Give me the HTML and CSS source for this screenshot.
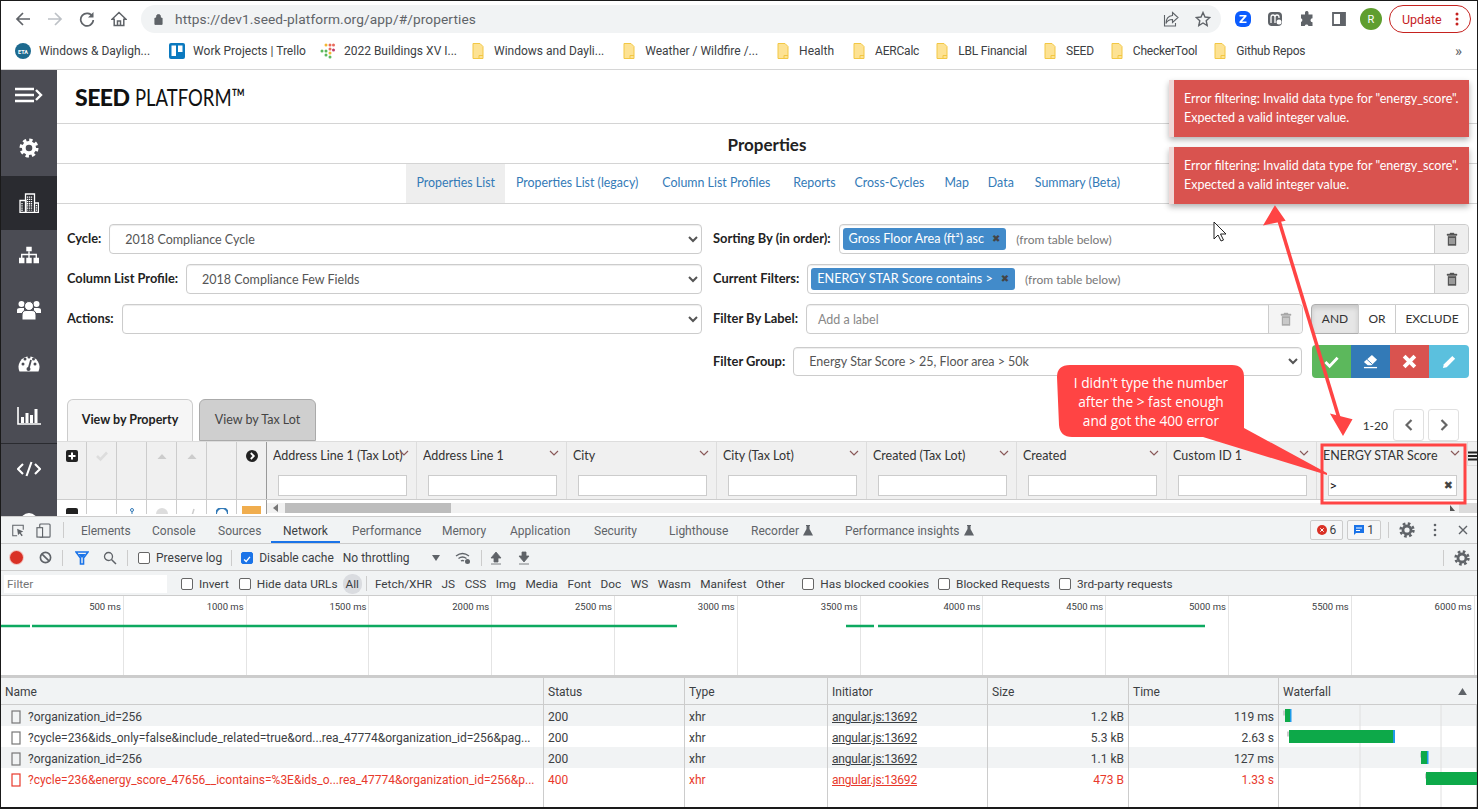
FILE: index.html
```
<!DOCTYPE html>
<html lang="en">
<head>
<meta charset="utf-8">
<title>SEED Platform - Properties</title>
<link rel="stylesheet" href="styles.css">
</head>
<body>
<svg class="sprite" width="0" height="0">
  <symbol id="folder" viewBox="0 0 12 16"><path d="M1 .5h7l3 3v12H1z" fill="#fde293" stroke="#f2c744"/><path d="M7 15.500v-3h4" fill="none" stroke="#f2c744"/></symbol>
  <symbol id="trash" viewBox="0 0 12 14"><path d="M4 2V1h4v1h3v1.400H1V2zM2 4.300h8V13.500H2z" fill="currentColor" stroke="currentColor" stroke-width=".4"/><path d="M4 6v6M6 6v6M8 6v6" stroke="#eee" stroke-width=".9"/></symbol>
  <symbol id="chev" viewBox="0 0 10 6"><path d="M1 1l4 4 4-4" fill="none" stroke="#8a5a5a" stroke-width="1.200"/></symbol>
  <symbol id="box" viewBox="0 0 10 14"><rect x="1" y="1" width="8" height="12" fill="none" stroke="currentColor" stroke-width="1.200"/></symbol>
  <symbol id="flask" viewBox="0 0 10 12"><path d="M3 1h4v1H6.500v3L10 11.500H0L3.500 5V2H3z" fill="#5f6368"/></symbol>
  <symbol id="gearg" viewBox="0 0 16 16"><circle cx="8" cy="8" r="6.400" fill="none" stroke="#5f6368" stroke-width="2.600" stroke-dasharray="2.600 2.430"/><circle cx="8" cy="8" r="4" fill="none" stroke="#5f6368" stroke-width="2.800"/></symbol>
</svg>

<header class="chrome">
  <div class="toolbar">
    <svg class="tb-ic tb-back" viewBox="0 0 16 16"><path d="M15 8H2M8 2L2 8l6 6" fill="none" stroke="#5f6368" stroke-width="1.700"/></svg>
    <svg class="tb-ic" viewBox="0 0 16 16"><path d="M1 8h13M8 2l6 6-6 6" fill="none" stroke="#bdc1c6" stroke-width="1.700"/></svg>
    <svg class="tb-ic" viewBox="0 0 16 16"><path d="M13.500 5.500A6.300 6.300 0 1 0 14.300 9" fill="none" stroke="#5f6368" stroke-width="1.700"/><path d="M14.500 1v5.500H9z" fill="#5f6368"/></svg>
    <svg class="tb-ic" viewBox="0 0 16 16"><path d="M8 1.500L1 8.300h2.200v6.200h9.600V8.300H15zM6.500 14.500V10h3v4.500" fill="none" stroke="#5f6368" stroke-width="1.500"/></svg>
    <div class="omnibox">
      <svg class="lock" viewBox="0 0 10 12"><path d="M1 5h8v7H1zM2.800 5V3.200a2.200 2.200 0 0 1 4.400 0V5" fill="#5f6368" stroke="#5f6368"/></svg>
      <span class="url">https://dev1.seed-platform.org/app/#/properties</span>
      <svg class="omni-ic" viewBox="0 0 16 16"><path d="M9.500 1.500l5.500 5-5.500 5V8.500C6 8.500 4 10 3 12.500 3 8 5.500 5 9.500 4.500zM1.500 4v11h11v-3" fill="none" stroke="#5f6368" stroke-width="1.100"/></svg>
      <svg class="omni-ic star" viewBox="0 0 16 16"><path d="M8 1.500l2 4.500 4.800.500-3.600 3.200 1 4.800L8 12l-4.200 2.500 1-4.800L1.200 6.500 6 6z" fill="none" stroke="#5f6368" stroke-width="1.400"/></svg>
    </div>
    <div class="exts">
      <svg class="ext" viewBox="0 0 16 16"><rect x="0" y="0" width="16" height="16" rx="6" fill="#0b5cff"/><path d="M4.500 4h7v1.500L7 10.500h4.500V12h-7v-1.500l4.500-5H4.500z" fill="#fff"/></svg>
      <svg class="ext" viewBox="0 0 16 16"><rect x="1" y="1" width="14" height="14" rx="4" fill="#5f6368"/><path d="M4 12V6a2 2 0 0 1 4 0v6M8 6a2 2 0 0 1 4 0v1" fill="none" stroke="#fff" stroke-width="1.300"/><circle cx="12" cy="11" r="2.500" fill="#fff"/></svg>
      <svg class="ext" viewBox="0 0 16 16"><path d="M6 1.500a1.800 1.800 0 0 1 3.500 0V3.500h4v3.700a2 2 0 0 0 0 4V15H9.500a2 2 0 0 0-3.800 0H2v-4a2 2 0 0 0 0-3.800V3.500h4z" fill="#5f6368"/></svg>
      <svg class="ext" viewBox="0 0 16 16"><path d="M2 2h12v12H2z" fill="none" stroke="#5f6368" stroke-width="1.800"/><path d="M9 2h5v12H9z" fill="#5f6368"/></svg>
      <span class="avatar">R</span>
      <div class="update"><span>Update</span><svg class="dots" viewBox="0 0 4 14"><circle cx="2" cy="2" r="1.500" fill="#c5221f"/><circle cx="2" cy="7" r="1.500" fill="#c5221f"/><circle cx="2" cy="12" r="1.500" fill="#c5221f"/></svg></div>
    </div>
  </div>
  <nav class="bookmarks">
    <span class="bm"><svg class="bm-ic" viewBox="0 0 16 16"><circle cx="8" cy="8" r="8" fill="#1d6a8f"/><text x="8" y="10.500" class="eta">ETA</text></svg>Windows &amp; Dayligh...</span>
    <span class="bm bm-trello"><svg class="bm-ic" viewBox="0 0 16 16"><rect width="16" height="16" rx="2" fill="#0b79bf"/><rect x="2.500" y="2.500" width="4.500" height="10.500" fill="#fff"/><rect x="9" y="2.500" width="4.500" height="6.500" fill="#fff"/></svg>Work Projects | Trello</span>
    <span class="bm bm-slack"><svg class="bm-ic" viewBox="0 0 16 16"><g fill="#e96a5b"><circle cx="10" cy="2" r="1.500"/><circle cx="13.500" cy="2" r="1.500"/><circle cx="10" cy="6" r="1.500"/></g><g fill="#f2b632"><circle cx="10" cy="10" r="1.500"/><circle cx="6" cy="2" r="1.500"/></g><g fill="#c0396b"><circle cx="13.500" cy="7" r="1.500"/></g><g fill="#5cb85c"><circle cx="2" cy="8" r="1.500"/><circle cx="6" cy="8" r="1.500"/><circle cx="6" cy="12" r="1.500"/><circle cx="10" cy="14" r="1.500"/></g></svg>2022 Buildings XV I...</span>
    <span class="bm bm-f1"><svg class="bm-fold"><use href="#folder"/></svg>Windows and Dayli...</span>
    <span class="bm bm-f"><svg class="bm-fold"><use href="#folder"/></svg>Weather / Wildfire /...</span>
    <span class="bm bm-f"><svg class="bm-fold"><use href="#folder"/></svg>Health</span>
    <span class="bm bm-f bm-n"><svg class="bm-fold"><use href="#folder"/></svg>AERCalc</span>
    <span class="bm bm-s bm-n"><svg class="bm-fold"><use href="#folder"/></svg>LBL Financial</span>
    <span class="bm bm-s bm-n"><svg class="bm-fold"><use href="#folder"/></svg>SEED</span>
    <span class="bm bm-s bm-n"><svg class="bm-fold"><use href="#folder"/></svg>CheckerTool</span>
    <span class="bm bm-s bm-n"><svg class="bm-fold"><use href="#folder"/></svg>Github Repos</span>
    <span class="bm-more">»</span>
  </nav>
</header>

<section class="app">
  <aside class="sidebar">
    <div class="side-item side-h53"><svg class="side-ic side-menu" viewBox="0 0 28 16"><path d="M0 2h19M0 8h19M0 14h19" stroke="#fff" stroke-width="2.400"/><path d="M21 3l5 5-5 5" fill="none" stroke="#fff" stroke-width="2.400"/></svg></div>
    <div class="side-item side-h53"><svg class="side-ic" viewBox="0 0 20 20"><circle cx="10" cy="10" r="7.900" fill="none" stroke="#fff" stroke-width="3.200" stroke-dasharray="3.300 2.900"/><circle cx="10" cy="10" r="5.200" fill="none" stroke="#fff" stroke-width="3.800"/></svg></div>
    <div class="side-item side-active"><svg class="side-ic side-flat" viewBox="0 0 20 20"><path d="M1 7.500h6v12H1zM6.500 1h9v18.500h-9zM15.500 10h4v9.500h-4z" fill="none" stroke="#fff" stroke-width="1.300"/><path d="M8.500 3.500v14M10.500 3.500v14M12.500 3.500v14M3 10v8M17.500 12v6" stroke="#fff" stroke-width="1.300" stroke-dasharray="1.300 .9"/></svg></div>
    <div class="side-item side-h53"><svg class="side-ic" viewBox="0 0 22 20"><path d="M8 1h6v5H8zM0 13h6v6H0zM8 13h6v6H8zM16 13h6v6h-6z" fill="#fff"/><path d="M3 14V9.500h16V14M11 6v8" fill="none" stroke="#fff" stroke-width="1.500"/></svg></div>
    <div class="side-item"><svg class="side-ic side-wide side-flat" viewBox="0 0 24 20"><circle cx="4.500" cy="4" r="3" fill="#fff"/><circle cx="19.500" cy="4" r="3" fill="#fff"/><path d="M0 13V10q0-2 3-2h4v5zM24 13V10q0-2-3-2h-4v5z" fill="#fff"/><circle cx="12" cy="6" r="4.500" fill="#fff" stroke="#4b4c54"/><path d="M5 20v-5q0-4.500 4-4.500h6q4 0 4 4.500v5z" fill="#fff" stroke="#4b4c54"/></svg></div>
    <div class="side-item"><svg class="side-ic side-wide" viewBox="0 0 22 20"><path d="M1.500 18.500a10.500 10.500 0 1 1 19 0z" fill="#fff"/><g fill="#4b4c54"><circle cx="5" cy="11" r="1.500"/><circle cx="7" cy="6" r="1.500"/><circle cx="11" cy="4" r="1.500"/><circle cx="17" cy="11" r="1.500"/><circle cx="15.500" cy="6" r="1.500"/></g><path d="M10.500 16L13 7" stroke="#4b4c54" stroke-width="1.800"/><circle cx="10.500" cy="16" r="2" fill="#4b4c54"/></svg></div>
    <div class="side-item side-chart"><svg class="side-ic side-wide" viewBox="0 0 24 20"><path d="M1 1v17h23" fill="none" stroke="#fff" stroke-width="1.600"/><path d="M4 11h3v6H4zM8.500 7h3v10h-3zM13 9h3v8h-3zM17.500 3h3v14h-3z" fill="#fff"/></svg></div>
    <div class="side-item side-code"><svg class="side-ic side-wide" viewBox="0 0 24 16"><path d="M6 3L1 8l5 5M18 3l5 5-5 5M14.500 1L9.500 15" fill="none" stroke="#fff" stroke-width="2.100"/></svg></div>
    <div class="side-last"></div>
  </aside>

  <main class="content">
    <div class="brand"><b>SEED</b> <span class="brand-thin">PLATFORM™</span></div>
    <h1 class="title">Properties</h1>
    <nav class="subnav">
      <a class="sub sub-active">Properties List</a>
      <a class="sub">Properties List (legacy)</a>
      <a class="sub">Column List Profiles</a>
      <a class="sub">Reports</a>
      <a class="sub">Cross-Cycles</a>
      <a class="sub">Map</a>
      <a class="sub">Data</a>
      <a class="sub">Summary (Beta)</a>
    </nav>

    <form class="filters">
      <div class="fcol fcol-left">
        <div class="frow"><label class="flabel">Cycle:</label><select class="fselect"><option>2018 Compliance Cycle</option></select></div>
        <div class="frow"><label class="flabel">Column List Profile:</label><select class="fselect"><option>2018 Compliance Few Fields</option></select></div>
        <div class="frow"><label class="flabel">Actions:</label><select class="fselect"><option></option></select></div>
      </div>
      <div class="fcol fcol-right">
        <div class="frow">
          <label class="flabel">Sorting By (in order):</label>
          <div class="tagbox">
            <span class="tag">Gross Floor Area (ft²) asc<i class="tag-x">✖</i></span>
            <span class="hint">(from table below)</span>
            <span class="tb-trash"><svg class="trash-ic"><use href="#trash"/></svg></span>
          </div>
        </div>
        <div class="frow">
          <label class="flabel">Current Filters:</label>
          <div class="tagbox">
            <span class="tag">ENERGY STAR Score contains &gt;<i class="tag-x">✖</i></span>
            <span class="hint">(from table below)</span>
            <span class="tb-trash"><svg class="trash-ic"><use href="#trash"/></svg></span>
          </div>
        </div>
        <div class="frow">
          <label class="flabel">Filter By Label:</label>
          <div class="tagbox labelbox">
            <span class="placeholder">Add a label</span>
            <span class="tb-trash tb-trash-off"><svg class="trash-ic"><use href="#trash"/></svg></span>
          </div>
          <div class="btn-group">
            <span class="seg seg-on">AND</span><span class="seg seg-or">OR</span><span class="seg seg-ex">EXCLUDE</span>
          </div>
        </div>
        <div class="frow frow-group">
          <label class="flabel">Filter Group:</label>
          <select class="fselect group-select"><option>Energy Star Score &gt; 25, Floor area &gt; 50k</option></select>
          <div class="actions">
            <span class="act act-g"><svg viewBox="0 0 16 14" class="act-ic"><path d="M1.500 7.500l4.500 4.500 8.500-9" fill="none" stroke="#fff" stroke-width="3"/></svg></span>
            <span class="act act-b"><svg viewBox="0 0 16 16" class="act-ic"><path d="M9.500 1l5.500 5-6 6H5L1 8.500z" fill="#fff"/><path d="M4 5.500l5.500 5M1 14.500h14" stroke="#337ab7" stroke-width="1"/><path d="M1 14.500h14" stroke="#fff" stroke-width="1.400"/></svg></span>
            <span class="act act-r"><svg viewBox="0 0 14 14" class="act-ic"><path d="M2 2l10 10M12 2L2 12" stroke="#fff" stroke-width="3.600"/></svg></span>
            <span class="act act-c"><svg viewBox="0 0 16 16" class="act-ic"><path d="M1 15l1-4L11 2l3 3-9 9z" fill="#fff"/></svg></span>
          </div>
        </div>
      </div>
    </form>

    <div class="tabbar">
      <span class="vtab vtab-on">View by Property</span>
      <span class="vtab vtab-off">View by Tax Lot</span>
      <div class="pager"><span class="pager-count">1-20</span>
        <span class="pg"><svg viewBox="0 0 8 12" class="pg-ic"><path d="M6.500 1L1.500 6l5 5" fill="none" stroke="#666" stroke-width="2.200"/></svg></span>
        <span class="pg"><svg viewBox="0 0 8 12" class="pg-ic"><path d="M1.500 1l5 5-5 5" fill="none" stroke="#666" stroke-width="2.200"/></svg></span>
      </div>
    </div>

    <div class="grid-head">
      <div class="gh-ic"><svg viewBox="0 0 12 12" class="gi"><rect width="12" height="12" rx="2" fill="#222"/><path d="M6 2.500v7M2.500 6h7" stroke="#fff" stroke-width="2"/></svg></div>
      <div class="gh-ic"><svg viewBox="0 0 12 10" class="gi"><path d="M1 5l3.500 3.500L11 1.500" fill="none" stroke="#ddd" stroke-width="2.600"/></svg></div>
      <div class="gh-ic"></div>
      <div class="gh-ic"><svg viewBox="0 0 10 6" class="gi-t"><path d="M5 0l4.500 5H.5z" fill="#ccc"/></svg></div>
      <div class="gh-ic"><svg viewBox="0 0 10 6" class="gi-t"><path d="M5 0l4.500 5H.5z" fill="#ccc"/></svg></div>
      <div class="gh-ic"></div>
      <div class="gh-ic"><svg viewBox="0 0 12 12" class="gi"><circle cx="6" cy="6" r="6" fill="#222"/><path d="M4.800 3l3 3-3 3" fill="none" stroke="#fff" stroke-width="1.800"/></svg></div>
      <div class="gh-col"><div class="gh-name"><span class="gh-txt">Address Line 1 (Tax Lot)</span><svg class="gh-chev"><use href="#chev"/></svg></div><span class="gh-input"></span></div>
      <div class="gh-col"><div class="gh-name"><span class="gh-txt">Address Line 1</span><svg class="gh-chev"><use href="#chev"/></svg></div><span class="gh-input"></span></div>
      <div class="gh-col"><div class="gh-name"><span class="gh-txt">City</span><svg class="gh-chev"><use href="#chev"/></svg></div><span class="gh-input"></span></div>
      <div class="gh-col"><div class="gh-name"><span class="gh-txt">City (Tax Lot)</span><svg class="gh-chev"><use href="#chev"/></svg></div><span class="gh-input"></span></div>
      <div class="gh-col"><div class="gh-name"><span class="gh-txt">Created (Tax Lot)</span><svg class="gh-chev"><use href="#chev"/></svg></div><span class="gh-input"></span></div>
      <div class="gh-col"><div class="gh-name"><span class="gh-txt">Created</span><svg class="gh-chev"><use href="#chev"/></svg></div><span class="gh-input"></span></div>
      <div class="gh-col"><div class="gh-name"><span class="gh-txt">Custom ID 1</span><svg class="gh-chev"><use href="#chev"/></svg></div><span class="gh-input"></span></div>
      <div class="gh-col gh-last"><div class="gh-name"><span class="gh-txt">ENERGY STAR Score</span><svg class="gh-chev"><use href="#chev"/></svg></div><span class="gh-input gh-filled"><span>&gt;</span><i class="gh-clear">✖</i></span></div>
      <div class="gh-menu"><svg viewBox="0 0 12 10" class="gi"><path d="M0 1.500h12M0 5h12M0 8.500h12" stroke="#222" stroke-width="2"/></svg></div>
    </div>
    <div class="grid-row">
      <div class="gr-ic"><svg viewBox="0 0 12 12" class="gi"><rect width="12" height="12" rx="2" fill="#222"/></svg></div>
      <div class="gr-ic"></div>
      <div class="gr-ic"><svg viewBox="0 0 8 12" class="gi-s"><circle cx="4" cy="2" r="1.500" fill="none" stroke="#337ab7"/><path d="M4 3.500v8" stroke="#337ab7"/></svg></div>
      <div class="gr-ic"><svg viewBox="0 0 12 12" class="gi"><circle cx="6" cy="6" r="6" fill="#ddd"/></svg></div>
      <div class="gr-ic"><svg viewBox="0 0 8 12" class="gi-s"><path d="M6 1L3 11" stroke="#ccc" stroke-width="1.500"/></svg></div>
      <div class="gr-ic"><svg viewBox="0 0 12 12" class="gi"><circle cx="6" cy="6" r="6" fill="none" stroke="#337ab7" stroke-width="2"/></svg></div>
      <div class="gr-ic gr-orange"><span class="orange"></span></div>
      <div class="scrollbar">
        <svg viewBox="0 0 6 8" class="sb-arrow"><path d="M5 0v8L0 4z" fill="#777"/></svg>
        <span class="sb-thumb"></span>
        <svg viewBox="0 0 6 8" class="sb-end"><path d="M1 1l5 6H1z" fill="#555"/></svg>
        <span class="sb-corner"></span>
      </div>
    </div>
  </main>
</section>

<section class="devtools">
  <div class="dt-tabs">
    <svg class="dt-i1" viewBox="0 0 16 16"><path d="M7 14H2V2h12v5" fill="none" stroke="#5f6368" stroke-width="1.200"/><path d="M7 6l7 3-3 1.500 2.500 3-1.500 1-2-3L8 13z" fill="#5f6368"/></svg>
    <svg class="dt-i2" viewBox="0 0 16 16"><rect x="4" y="1" width="11" height="14" rx="1" fill="none" stroke="#5f6368" stroke-width="1.200"/><rect x="1" y="5" width="6" height="10" fill="#f1f3f4" stroke="#5f6368" stroke-width="1.200"/></svg>
    <span class="dt-sep dt-sep1"></span>
    <span class="dt-tab t-el">Elements</span>
    <span class="dt-tab t-co">Console</span>
    <span class="dt-tab t-so">Sources</span>
    <span class="dt-tab dt-on">Network</span>
    <span class="dt-tab t-pe">Performance</span>
    <span class="dt-tab t-me">Memory</span>
    <span class="dt-tab t-ap">Application</span>
    <span class="dt-tab t-se">Security</span>
    <span class="dt-tab t-li">Lighthouse</span>
    <span class="dt-tab t-re">Recorder<svg class="flask"><use href="#flask"/></svg></span>
    <span class="dt-tab t-pi">Performance insights<svg class="flask"><use href="#flask"/></svg></span>
    <div class="dt-right">
      <span class="badge"><svg class="badge-ic" viewBox="0 0 10 10"><circle cx="5" cy="5" r="5" fill="#d93025"/><path d="M3.300 3.300l3.400 3.400M6.700 3.300l-3.400 3.400" stroke="#fff"/></svg>6</span>
      <span class="badge"><svg class="badge-ic badge-msg" viewBox="0 0 10 10"><path d="M0 0h10v8H2L0 10z" fill="#1a73e8"/><path d="M2 3h6M2 5.500h4" stroke="#fff"/></svg>1</span>
      <span class="dt-sep dt-sep2"></span>
      <svg class="dt-gear"><use href="#gearg"/></svg>
      <svg class="dt-dots" viewBox="0 0 4 14"><circle cx="2" cy="2" r="1.300" fill="#5f6368"/><circle cx="2" cy="7" r="1.300" fill="#5f6368"/><circle cx="2" cy="12" r="1.300" fill="#5f6368"/></svg>
      <svg class="dt-close" viewBox="0 0 10 10"><path d="M1 1l8 8M9 1L1 9" stroke="#5f6368" stroke-width="1.400"/></svg>
    </div>
  </div>
  <div class="dt-bar">
    <span class="rec"></span>
    <svg class="dt-clear" viewBox="0 0 14 14"><circle cx="7" cy="7" r="5.500" fill="none" stroke="#5f6368" stroke-width="1.800"/><path d="M3 3l8 8" stroke="#5f6368" stroke-width="1.800"/></svg>
    <span class="dt-sep"></span>
    <svg class="dt-funnel" viewBox="0 0 14 14"><path d="M1 1h12L8.500 7v6h-3V7z" fill="none" stroke="#1a73e8" stroke-width="1.600"/><path d="M3.500 3h7L8 6.500H6z" fill="#1a73e8"/></svg>
    <svg class="dt-search" viewBox="0 0 14 14"><circle cx="5.500" cy="5.500" r="4" fill="none" stroke="#5f6368" stroke-width="1.300"/><path d="M8.500 8.500l4.500 4.500" stroke="#5f6368" stroke-width="1.500"/></svg>
    <span class="dt-sep"></span>
    <span class="cb"></span><span class="dt-lbl">Preserve log</span>
    <span class="dt-sep"></span>
    <span class="cb cb-on"><svg viewBox="0 0 12 12"><path d="M2.500 6.500l2.500 2.500 4.500-5.500" fill="none" stroke="#fff" stroke-width="1.600"/></svg></span><span class="dt-lbl">Disable cache</span>
    <span class="dt-lbl throttle">No throttling</span>
    <svg class="tri" viewBox="0 0 8 6"><path d="M0 0h8L4 6z" fill="#5f6368"/></svg>
    <svg class="wifi" viewBox="0 0 16 14"><path d="M1 5q6.500-5 13 0M3.500 7.500q4-3 8 0M6 10q1.500-1 3 0" fill="none" stroke="#5f6368" stroke-width="1.300"/><circle cx="12.500" cy="10.500" r="2.500" fill="#5f6368"/></svg>
    <span class="dt-sep"></span>
    <svg class="arr" viewBox="0 0 12 14"><path d="M6 1L1 7h3v4h4V7h3zM1 13h10" fill="#5f6368" stroke="#5f6368" stroke-width=".8"/></svg>
    <svg class="arr arr2" viewBox="0 0 12 14"><path d="M6 11L1 5h3V1h4v4h3zM1 13h10" fill="#5f6368" stroke="#5f6368" stroke-width=".8"/></svg>
    <span class="bar-gap"></span>
    <span class="dt-sep"></span>
    <svg class="dt-gear bar-gear"><use href="#gearg"/></svg>
  </div>
  <div class="dt-filter">
    <span class="filter-input">Filter</span>
    <span class="cb"></span><span class="dt-lbl lbl-inv">Invert</span>
    <span class="cb"></span><span class="dt-lbl lbl-hide">Hide data URLs</span>
    <span class="chip chip-on">All</span><span class="dt-sep"></span>
    <span class="chip">Fetch/XHR</span><span class="chip">JS</span><span class="chip">CSS</span><span class="chip">Img</span><span class="chip">Media</span><span class="chip">Font</span><span class="chip">Doc</span><span class="chip">WS</span><span class="chip">Wasm</span><span class="chip">Manifest</span><span class="chip">Other</span>
    <span class="cb cb-a"></span><span class="dt-lbl lbl-a">Has blocked cookies</span>
    <span class="cb"></span><span class="dt-lbl lbl-a">Blocked Requests</span>
    <span class="cb"></span><span class="dt-lbl">3rd-party requests</span>
  </div>
  <div class="timeline">
    <span class="tick">500 ms</span><span class="tick">1000 ms</span><span class="tick">1500 ms</span><span class="tick">2000 ms</span><span class="tick">2500 ms</span><span class="tick">3000 ms</span><span class="tick">3500 ms</span><span class="tick">4000 ms</span><span class="tick">4500 ms</span><span class="tick">5000 ms</span><span class="tick">5500 ms</span><span class="tick">6000 ms</span>
    <svg class="tl-bars" viewBox="0 0 1476 6"><path d="M0 3h29M31 3h645M845 3h28M877 3h327" stroke="#0da960" stroke-width="2.500"/></svg>
  </div>
  <div class="net">
    <div class="net-row net-head">
      <span class="nc nc-name">Name</span><span class="nc">Status</span><span class="nc">Type</span><span class="nc">Initiator</span><span class="nc">Size</span><span class="nc">Time</span><span class="nc nc-wf">Waterfall<svg class="wf-tri" viewBox="0 0 10 8"><path d="M5 0l5 8H0z" fill="#5f6368"/></svg></span>
    </div>
    <div class="net-row net-alt">
      <span class="nc nc-name"><svg class="file"><use href="#box"/></svg>?organization_id=256</span><span class="nc">200</span><span class="nc">xhr</span><span class="nc nc-link">angular.js:13692</span><span class="nc nc-r">1.2 kB</span><span class="nc nc-r">119 ms</span><span class="nc"></span>
    </div>
    <div class="net-row">
      <span class="nc nc-name"><svg class="file"><use href="#box"/></svg>?cycle=236&amp;ids_only=false&amp;include_related=true&amp;ord...rea_47774&amp;organization_id=256&amp;pag...</span><span class="nc">200</span><span class="nc">xhr</span><span class="nc nc-link">angular.js:13692</span><span class="nc nc-r">5.3 kB</span><span class="nc nc-r">2.63 s</span><span class="nc"></span>
    </div>
    <div class="net-row net-alt">
      <span class="nc nc-name"><svg class="file"><use href="#box"/></svg>?organization_id=256</span><span class="nc">200</span><span class="nc">xhr</span><span class="nc nc-link">angular.js:13692</span><span class="nc nc-r">1.1 kB</span><span class="nc nc-r">127 ms</span><span class="nc"></span>
    </div>
    <div class="net-row net-err">
      <span class="nc nc-name"><svg class="file"><use href="#box"/></svg>?cycle=236&amp;energy_score_47656__icontains=%3E&amp;ids_o...rea_47774&amp;organization_id=256&amp;p...</span><span class="nc">400</span><span class="nc">xhr</span><span class="nc nc-link">angular.js:13692</span><span class="nc nc-r">473 B</span><span class="nc nc-r">1.33 s</span><span class="nc"></span>
    </div>
    <div class="net-row net-fill"><span class="nc"></span><span class="nc"></span><span class="nc"></span><span class="nc"></span><span class="nc"></span><span class="nc"></span><span class="nc"></span></div>
    <svg class="wf" viewBox="0 0 198 104">
      <path d="M81 0v104M162 0v104" stroke="#e0e0e0"/>
      <path d="M4 8h2M8 29h2M141 50h3M146 71h3" stroke="#ccc" stroke-width="5"/>
      <rect x="6" y="4" width="5" height="13" fill="#0da949"/><rect x="11" y="4" width="1.500" height="13" fill="#1e9be8"/>
      <rect x="10" y="25" width="104" height="13" fill="#0da949"/><rect x="114" y="25" width="2" height="13" fill="#1e9be8"/>
      <rect x="142" y="46" width="6" height="13" fill="#0da949"/><rect x="148" y="46" width="1.500" height="13" fill="#1e9be8"/>
      <rect x="147" y="67" width="51" height="13" fill="#0da949"/>
    </svg>
  </div>
</section>

<div class="toast toast-1">Error filtering: Invalid data type for "energy_score".<br>Expected a valid integer value.</div>
<div class="toast toast-2">Error filtering: Invalid data type for "energy_score".<br>Expected a valid integer value.</div>
<svg class="annot" viewBox="0 0 1478 809">
  <path d="M1277 214L1342 428" stroke="#ff4444" stroke-width="3.500"/>
  <path d="M1275 207l-10 17 19-4zM1343 434l-11-19 19 5z" fill="#ff4444" stroke="#ff4444" stroke-width="2"/>
  <path d="M1070 365H1232Q1244 365 1244 377V428L1327 473V475L1203 437H1072Q1060 437 1059 425L1057 377Q1057 365 1070 365Z" fill="#ff4444"/>
  <path d="M1322 445h143v58h-143z" fill="none" stroke="#ff4444" stroke-width="3"/>
  <path d="M1214 222v17l4-4 3 6 2.500-1-3-6h5.500z" fill="#fff" stroke="#222" stroke-width="1"/>
</svg>
<div class="callout">I didn't type the number<br>after the &gt; fast enough<br>and got the 400 error</div>
</body>
</html>
```
FILE: styles.css
```
* { box-sizing: border-box; }
html, body { margin: 0; padding: 0; }
body {
  width: 1478px; height: 809px; overflow: hidden; position: relative;
  background: #fff; font-family: Roboto, "Liberation Sans", sans-serif; font-size: 12px; color: #303942;
  border: 1px solid #1a1a1a; border-bottom-width: 2px;
  display: flex; flex-direction: column;
}
.sprite { position: absolute; }

/* browser chrome */
.chrome { height: 69px; flex: none; border-bottom: 1px solid #d6d6d6; background: #fff; }
.toolbar { height: 34px; display: flex; align-items: center; padding: 2px 6px 0 0; }
.tb-ic { width: 16px; height: 16px; margin-right: 16px; flex: none; }
.tb-back { margin-left: 14px; }
.omnibox { width: 1080px; height: 28px; margin-left: -2px; border-radius: 14px; background: #f1f3f4; display: flex; align-items: center; padding-left: 13px; flex: none; }
.lock { width: 9px; height: 12px; flex: none; }
.url { font-size: 13.700px; color: #5f6368; margin-left: 12px; flex: 1; letter-spacing: .1px; }
.omni-ic { width: 16px; height: 16px; flex: none; margin-right: 16px; }
.omni-ic.star { margin-right: 10px; }
.exts { display: flex; align-items: center; margin-left: 14px; }
.ext { width: 16px; height: 16px; margin-right: 16px; flex: none; }
.avatar { width: 22px; height: 22px; border-radius: 50%; background: #5f9e2f; color: #fff; font-size: 11px; display: flex; align-items: center; justify-content: center; margin-left: -3px; }
.update { width: 82px; height: 28px; margin-left: 7px; border: 1px solid #c5221f; border-radius: 14px; display: flex; align-items: center; padding-left: 12px; color: #c5221f; font-size: 12.500px; }
.dots { width: 4px; height: 14px; margin-left: 13px; }
.bookmarks { height: 34px; display: flex; align-items: center; padding: 0 0 2px 14px; font-size: 12px; color: #3c4043; white-space: nowrap; }
.bm { display: flex; align-items: center; }
.bm-ic { width: 16px; height: 16px; margin-right: 8px; flex: none; }
.eta { font: bold 5.500px Roboto, sans-serif; fill: #fff; text-anchor: middle; }
.bm-fold { width: 12px; height: 16px; margin-right: 10px; flex: none; }
.bm-trello { margin-left: 19px; }
.bm-slack { margin-left: 14px; }
.bm-f1 { margin-left: 15px; }
.bm-f { margin-left: 19px; }
.bm-s { margin-left: 17px; }
.bm-n { letter-spacing: -.2px; }
.bm-more { margin-left: auto; margin-right: 15px; font-size: 15px; color: #5f6368; }

/* app */
.app { height: 446px; flex: none; display: flex; overflow: hidden; }
.sidebar { width: 56px; flex: none; background: #4b4c54; display: flex; flex-direction: column; }
.side-item { height: 54px; flex: none; display: flex; align-items: center; justify-content: center; }
.side-h53 { height: 53px; }
.side-active { background: #2a2b30; height: 54px; }
.side-chart { height: 52px; }
.side-code { height: 54px; border-top: 1px solid #2a2b30; }
.side-ic { width: 20px; height: 20px; display: block; margin-top: -3px; }
.side-flat { margin-top: 0; }
.side-menu { width: 28px; height: 16px; }
.side-wide { width: 24px; height: 20px; }
.side-last { width: 18px; height: 18px; border-radius: 50%; background: #fff; margin: 16px auto 0; flex: none; }
.content { flex: 1; min-width: 0; font-family: Lato, "Liberation Sans", sans-serif; font-size: 13px; color: #333; }
.brand { height: 54px; border-bottom: 1px solid #d4d4d4; padding: 13px 0 0 18px; font-size: 23px; line-height: 28px; color: #111; letter-spacing: -.5px; }
.brand b { font-weight: 900; }
.brand-thin { display: inline-block; font-size: 24px; letter-spacing: 0; transform: scaleX(.77); transform-origin: left center; }
.title { margin: 0; height: 40px; border-bottom: 1px solid #d4d4d4; text-align: center; font-size: 17px; font-weight: 700; line-height: 41px; color: #222; }
.subnav { height: 40px; border-bottom: 1px solid #d4d4d4; display: flex; padding-left: 349px; }
.sub { height: 39px; padding: 0 10.500px; line-height: 38px; color: #337ab7; font-size: 12.400px; white-space: nowrap; }
.sub-active { background: #eeeeee; }
.sub:nth-child(3) { margin-left: 3px; }
.sub:nth-child(4) { margin-left: 2px; }
.sub:nth-child(5) { margin-left: -2px; }
.sub:nth-child(6) { margin-left: -1px; }
.sub:nth-child(7) { margin-left: -2px; }
.filters { height: 195px; padding: 20px 8px 0 10px; display: flex; gap: 11px; }
.fcol { display: flex; flex-direction: column; gap: 10px; }
.fcol-left { width: 635px; }
.fcol-right { flex: 1; }
.frow { height: 30px; display: flex; align-items: center; gap: 8px; }
.flabel { font-weight: 700; font-size: 12.900px; color: #222; white-space: nowrap; margin-top: -3px; }
.fcol-left .flabel { font-size: 12.800px; }
.fselect { flex: 1; min-width: 0; height: 30px; border: 1px solid #ccc; border-radius: 4px; background-color: #fff; font: 12.500px Lato, sans-serif; color: #555; padding-left: 11px; box-shadow: inset 0 1px 1px rgba(0,0,0,.075); }
.tagbox { flex: 1; min-width: 0; height: 30px; border: 1px solid #ccc; border-radius: 4px; display: flex; align-items: center; padding-left: 3px; background: #fff; box-shadow: inset 0 1px 1px rgba(0,0,0,.075); }
.tag { background: #428bca; border-radius: 3px; height: 22px; line-height: 21px; padding: 0 6px; color: #fff; font-size: 12.600px; white-space: nowrap; display: flex; }
.tag-x { font: normal 10px/21px "DejaVu Sans", sans-serif; color: #444; margin-left: 8px; }
.hint { color: #777; font-size: 12px; margin-left: 10px; flex: 1; }
.placeholder { color: #888; font-size: 12.500px; margin-left: 8px; flex: 1; }
.tb-trash { width: 34px; height: 28px; background: #eee; border-left: 1px solid #ccc; display: flex; align-items: center; justify-content: center; color: #555; border-radius: 0 4px 4px 0; flex: none; }
.tb-trash-off { color: #aaa; background: #f4f4f4; }
.trash-ic { width: 12px; height: 14px; }
.btn-group { display: flex; height: 30px; flex: none; }
.seg { height: 30px; border: 1px solid #ccc; line-height: 28px; text-align: center; font-size: 12px; margin-left: -1px; background: #fff; }
.seg-on { width: 48px; margin-left: 0; background: #e6e6e6; border-radius: 4px 0 0 4px; box-shadow: inset 0 3px 5px rgba(0,0,0,.125); border-color: #adadad; }
.seg-or { width: 38px; }
.seg-ex { width: 74px; border-radius: 0 4px 4px 0; }
.frow-group { height: 33px; margin-top: 1px; }
.frow-group .flabel { margin-top: -1px; }
.group-select { flex: 1; height: 29px; }
.actions { display: flex; height: 33px; flex: none; margin-left: 2px; }
.act { width: 39px; height: 33px; display: flex; align-items: center; justify-content: center; }
.act-g { background: #5cb85c; border-radius: 4px 0 0 4px; }
.act-b { background: #337ab7; }
.act-r { background: #d9534f; }
.act-c { background: #5bc0de; border-radius: 0 4px 4px 0; width: 40px; }
.act-ic { width: 15px; height: 15px; }
.tabbar { height: 42px; display: flex; align-items: flex-end; padding: 0 18px 0 10px; gap: 6px; }
.vtab { height: 42px; line-height: 39px; border: 1px solid #ccc; border-bottom: 0; border-radius: 6px 6px 0 0; font-size: 12.500px; text-align: center; }
.vtab-on { width: 126px; background: #f6f6f6; font-weight: 700; color: #222; }
.vtab-off { width: 117px; background: #cfcfcf; color: #444; border-color: #aaa; border-bottom: 1px solid #aaa; }
.pager { margin-left: auto; display: flex; align-items: center; gap: 4px; font-size: 12px; height: 32px; }
.pager-count { margin-right: 1px; }
.pg { width: 31px; height: 32px; border: 1px solid #e0e0e0; border-radius: 3px; display: flex; align-items: center; justify-content: center; }
.pg-ic { width: 8px; height: 12px; }
.grid-head { height: 59px; background: #f0f0f0; border-top: 1px solid #ddd; border-bottom: 1px solid #ccc; display: grid; grid-template-columns: repeat(7, 30px) repeat(8, 150px) 1fr; font-size: 12.500px; color: #333; }
.gh-ic { border-right: 1px solid #ccc; display: flex; justify-content: center; padding-top: 8px; }
.gh-ic:nth-child(7) { border-right-color: #999; }
.gi { width: 12px; height: 12px; display: block; }
.gi-t { width: 10px; height: 6px; margin-top: 4px; }
.gi-s { width: 8px; height: 12px; }
.gh-col { border-right: 1px solid #ddd; padding: 5px 0 0 6px; overflow: hidden; display: flex; flex-direction: column; }
.gh-name { display: flex; align-items: center; height: 16px; white-space: nowrap; padding-right: 12px; }
.gh-txt { overflow: hidden; flex: 1; min-width: 0; text-overflow: ellipsis; }
.gh-chev { width: 10px; height: 6px; flex: none; margin: -4px -5px 0 -5px; }
.gh-input { width: 129px; height: 21px; margin: 12px 0 0 5px; background: #fff; border: 1px solid #ccc; display: flex; align-items: center; justify-content: space-between; padding: 0 3px 0 1px; }
.gh-last { border-right: 0; }
.gh-filled { color: #111; font-family: Roboto, sans-serif; }
.gh-clear { font: normal 11px "DejaVu Sans", sans-serif; color: #444; }
.gh-menu { background: #f0f0f0; display: flex; justify-content: center; padding-top: 8px; height: 24px; border-left: 1px solid #ddd; border-bottom: 1px solid #ddd; }
.grid-row { height: 14px; overflow: hidden; display: grid; grid-template-columns: repeat(6, 30px) 30px 1fr; background: #fff; }
.gr-ic { border-right: 1px solid #ccc; display: flex; justify-content: center; padding-top: 8px; }
.gr-orange { padding-top: 6px; border-right-color: #999; }
.orange { width: 19px; height: 10px; background: #f0ad4e; display: block; }
.scrollbar { display: flex; align-items: center; height: 10px; margin-top: 3px; background: #f1f1f1; }
.sb-arrow { width: 6px; height: 8px; margin-left: 6px; flex: none; }
.sb-thumb { width: 166px; height: 10px; background: #bdbdbd; margin-left: 6px; }
.sb-end { width: 6px; height: 8px; margin-left: auto; flex: none; }
.sb-corner { width: 18px; height: 10px; background: #dcdcdc; margin-left: 4px; flex: none; }

/* devtools */
.devtools { flex: 1; min-height: 0; display: flex; flex-direction: column; background: #f1f3f4; border-top: 1px solid #ccc; color: #3c4043; font-size: 12px; }
.dt-tabs { height: 27px; flex: none; display: flex; align-items: center; border-bottom: 1px solid #ccc; white-space: nowrap; padding-left: 10px; }
.dt-i1 { width: 14px; height: 15px; }
.dt-i2 { width: 15px; height: 15px; margin-left: 11px; }
.dt-sep { width: 1px; height: 16px; background: #ccc; flex: none; margin: 0 8px; }
.dt-sep1 { margin: 0 17px 0 12px; }
.dt-tab { height: 26px; line-height: 28px; color: #5f6368; flex: none; }
.t-el { width: 71px; }
.t-co { width: 66px; }
.t-so { width: 65px; }
.dt-on { width: 69px; margin-left: -12px; text-align: center; color: #3c4043; border-bottom: 2px solid #1a73e8; }
.t-pe { width: 90px; margin-left: 12px; }
.t-me { width: 68px; }
.t-ap { width: 84px; }
.t-se { width: 75px; }
.t-li { width: 82px; }
.t-re { width: 94px; }
.flask { width: 10px; height: 12px; margin-left: 4px; vertical-align: -1px; }
.dt-right { margin-left: auto; display: flex; align-items: center; padding-right: 9px; }
.badge { height: 20px; border: 1px solid #ccc; border-radius: 2px; padding: 0 6px; display: flex; align-items: center; gap: 3px; margin-left: 4px; background: #f5f6f7; }
.badge-ic { width: 10px; height: 10px; }
.dt-sep.dt-sep2 { margin: 0 10px 0 7px; }
.dt-gear { width: 16px; height: 16px; flex: none; }
.dt-dots { width: 4px; height: 14px; margin-left: 18px; }
.dt-close { width: 10px; height: 10px; margin-left: 21px; }
.dt-bar { height: 27px; flex: none; display: flex; align-items: center; border-bottom: 1px solid #ccc; padding: 1px 0 0 9px; white-space: nowrap; }
.rec { width: 13px; height: 13px; border-radius: 50%; background: #d93025; flex: none; box-shadow: 0 0 0 1px #f2c4c0; }
.dt-clear { width: 13px; height: 13px; margin-left: 16px; }
.dt-bar .dt-sep { margin: 0 10px; }
.dt-funnel { width: 14px; height: 14px; margin-left: 2px; }
.dt-search { width: 14px; height: 14px; margin-left: 14px; }
.cb { width: 12px; height: 12px; border: 1px solid #666; border-radius: 2px; background: #fff; flex: none; display: block; }
.cb-on { background: #1a73e8; border-color: #1a73e8; }
.dt-lbl { margin-left: 6px; color: #3c4043; }
.dt-bar .dt-lbl + .dt-sep { margin: 0 9px; }
.throttle { margin-left: 9px; }
.tri { width: 8px; height: 6px; margin-left: 22px; }
.wifi { width: 16px; height: 14px; margin-left: 15px; }
.arr { width: 12px; height: 14px; margin-left: -2px; }
.arr2 { margin-left: 16px; }
.bar-gap { flex: 1; }
.bar-gear { margin-right: 7px; margin-left: 0; }
.dt-filter { height: 25px; flex: none; display: flex; align-items: center; border-bottom: 1px solid #ccc; padding-top: 1px; white-space: nowrap; font-size: 11.800px; }
.filter-input { width: 163px; height: 18px; background: #fff; padding-left: 3px; line-height: 18px; color: #757575; margin: 0 14px 0 3px; }
.lbl-inv { margin-right: 10px; }
.lbl-hide { margin-right: 5px; }
.dt-filter .dt-sep { margin: 0 5px 0 3px; height: 15px; }
.chip { padding: 0 3px; height: 20px; line-height: 20px; margin-right: 3.500px; color: #3c4043; border-radius: 9px; }
.chip-on { background: #dadce0; margin-right: 1px; }
.cb-a { margin-left: 11px; }
.lbl-a { margin-right: 9px; }
.timeline { height: 82px; flex: none; background: #fff; border-bottom: 3px solid #ccc; display: grid; grid-template-columns: repeat(12, 122.800px); position: relative; }
.tick { border-right: 1px solid #e4e4e4; text-align: right; padding: 5px 2px 0 0; font-size: 9.500px; color: #3c4043; }
.tl-bars { position: absolute; left: 0; top: 27px; width: 1476px; height: 6px; }
.net { flex: 1; min-height: 0; position: relative; background: #fff; display: flex; flex-direction: column; }
.net-row { height: 21px; flex: none; display: grid; grid-template-columns: 543px 141px 143px 160px 141px 150px 1fr; align-items: stretch; line-height: 25px; white-space: nowrap; }
.net-head { height: 27px; line-height: 28px; background: #f1f3f4; border-bottom: 1px solid #ccc; }
.net-alt { background: #f1f3f4; }
.net-err { color: #e8392c; }
.net-fill { flex: 1; }
.nc { border-right: 1px solid #ccc; padding: 0 4px; overflow: hidden; display: block; }
.nc-name { padding-left: 4px; }
.net-row:not(.net-head) .nc-name { padding-left: 10px; }
.nc-wf { border-right: 0; position: relative; }
.wf-tri { position: absolute; right: 10px; top: 10px; width: 9px; height: 7px; }
.nc-link { text-decoration: underline; letter-spacing: -.2px; }
.nc-r { text-align: right; }
.file { width: 10px; height: 14px; color: #777; margin-right: 7px; vertical-align: -3px; }
.net-err .file { color: #e8392c; }
.wf { position: absolute; right: 0; top: 27px; width: 198px; height: 104px; }

/* overlays */
.toast { position: absolute; left: 1168px; width: 300px; height: 57px; background: #d9534f; border-left: 5px solid #f0d8d7; color: #fff; font: 12.500px/19px Lato, sans-serif; padding: 9px 0 0 10px; box-shadow: 0 3px 6px rgba(0,0,0,.3); white-space: nowrap; }
.toast-1 { top: 79px; }
.toast-2 { top: 146px; }
.annot { position: absolute; left: -1px; top: -1px; width: 1478px; height: 809px; pointer-events: none; }
.callout { position: absolute; left: 1057px; top: 372px; width: 186px; text-align: center; color: #fff; font: 13.700px/19px "Open Sans", sans-serif; }
```
